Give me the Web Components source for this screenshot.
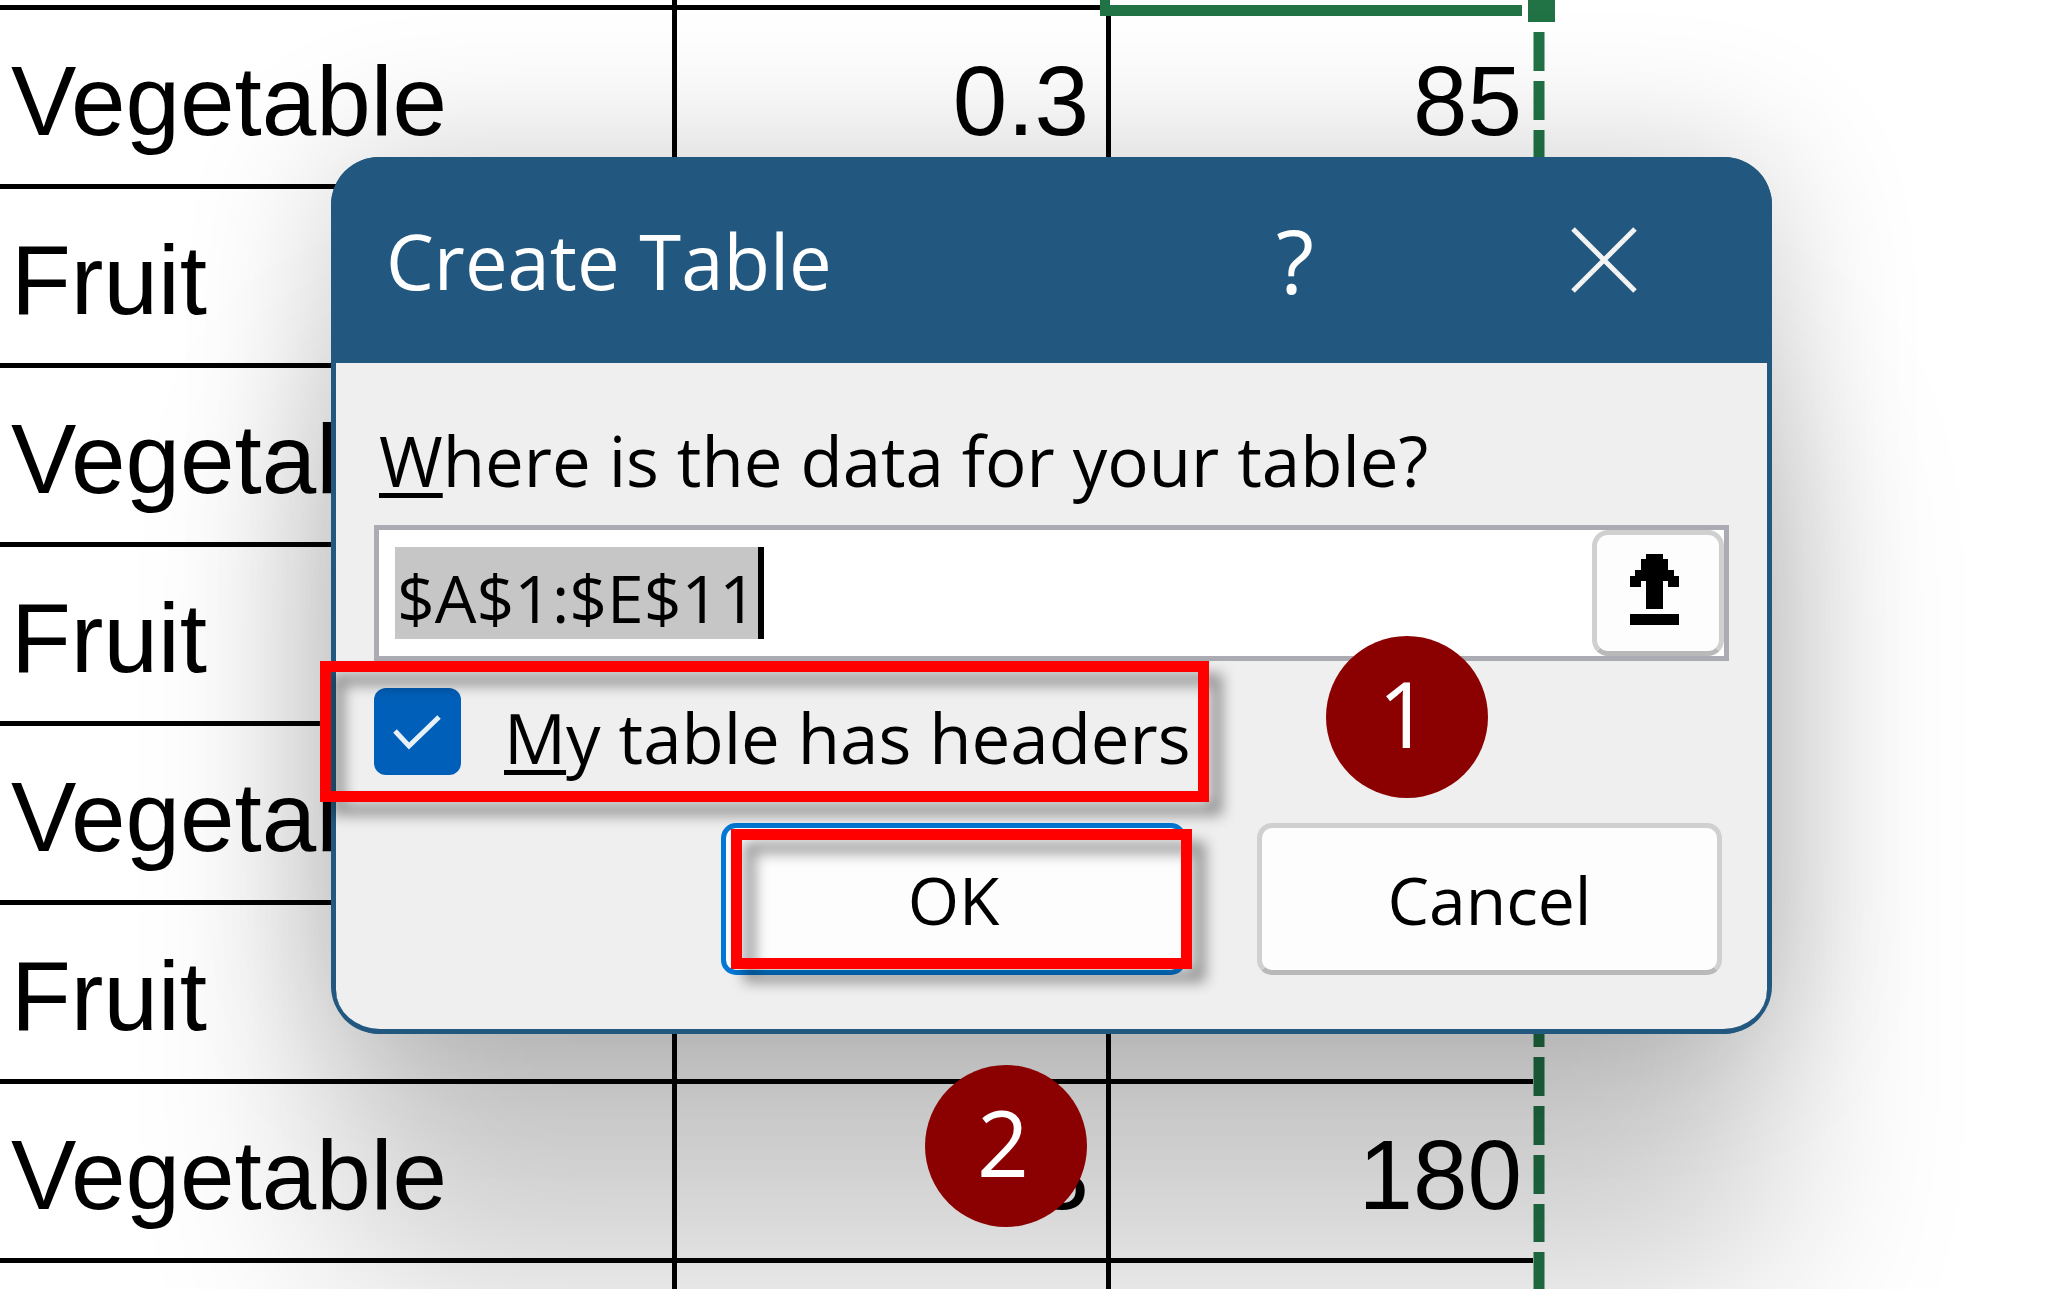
<!DOCTYPE html>
<html lang="en">
<head>
<meta charset="utf-8">
<title>Create Table</title>
<style>
  html, body { margin: 0; height: 100%; background: #fff; }
  body { overflow: hidden; font-family: "Open Sans", "Noto Sans", sans-serif; color: #000; }
</style>
</head>
<body>
<work-space>
  <sheet-grid></sheet-grid>
  <create-dialog heading="Create Table"></create-dialog>
  <step-badge class="two">2</step-badge>
</work-space>
<script>
const define = (name, html, setup) => {
  const template = document.createElement('template');
  template.innerHTML = html;
  customElements.define(name, class extends HTMLElement {
    constructor() {
      super();
      this.attachShadow({ mode: 'open' }).append(template.content.cloneNode(true));
    }
    connectedCallback() { if (setup) setup(this, this.shadowRoot); }
  });
};

define('step-badge', `
  <style>
    :host { display: grid; place-items: center; box-sizing: border-box; width: 162px; height: 162px; padding: 0 6px 8px 0;
      border-radius: 50%; background: #8b0000; color: #fff; font-size: 91px; font-weight: 500; line-height: 100px; }
  </style>
  <slot></slot>`);

define('high-light', `
  <style>
    :host { display: block; box-sizing: border-box; border: 11px solid #f00; pointer-events: none;
      filter: drop-shadow(13px 13px 7px rgba(0, 0, 0, .42)); }
  </style>`);

define('push-button', `
  <style>
    :host { display: block; width: 465px; }
    button { display: block; box-sizing: border-box; width: 100%; height: 152px; padding: 0; border: 5px solid #d0d0d0;
      border-bottom-color: #b9b9b9; border-radius: 15px; background: #fdfdfd; color: inherit; font: inherit; }
    :host([primary]) button { border-color: #0078d4; }
  </style>
  <button type="button"><slot></slot></button>`);

define('check-option', `
  <style>
    :host { display: flex; }
    label { display: flex; gap: 43px; align-items: center; height: 87px; white-space: nowrap; }
    .box { display: grid; width: 87px; height: 87px; }
    .box > * { grid-area: 1 / 1; }
    input { appearance: none; width: 87px; height: 87px; margin: 0; border-radius: 12px; background: #005fb8; }
    svg { width: 87px; height: 87px; pointer-events: none; }
    .text { padding-top: 10px; }
  </style>
  <label><span class="box"><input type="checkbox" checked>
    <svg viewBox="0 0 87 87" fill="none" stroke="#e8f0f8" stroke-width="5"><path d="M21 43 35 58 65 29"/></svg></span>
    <span class="text"><slot></slot></span></label>`);

define('range-field', `
  <style>
    :host { display: flex; box-sizing: border-box; height: 136px; padding-left: 16px; border: 5px solid #ababb3; background: #fff;
      align-items: center; }
    input { box-sizing: border-box; width: 363px; height: 92px; margin: 0; border: 0; padding: 8px 0 0 2px; outline: 0;
      background: #c6c6c6; color: #000; font: inherit; }
    .caret { width: 6px; height: 92px; background: #000; }
    button { display: grid; place-items: center; box-sizing: border-box; width: 132px; height: 126px; margin-left: auto; padding: 0 8px 8px 0;
      border: 5px solid #d0d0d0; border-bottom-color: #b9b9b9; border-radius: 16px; background: #fdfdfd; }
    svg { display: block; width: 49px; height: 71px; }
  </style>
  <input type="text" aria-label="Where is the data for your table?" value="$A$1:$E$11" spellcheck="false">
  <span class="caret"></span>
  <button type="button" aria-label="Collapse dialog">
    <svg viewBox="0 0 9 13" preserveAspectRatio="none" shape-rendering="crispEdges"><path d="M3 0h3v1h1v2h1v1h1v2H7V5H6v5H3V5H2v1H0V4h1V3h1V1h1zM0 11h9v2H0z"/></svg>
  </button>`);

define('title-bar', `
  <style>
    :host { display: flex; align-items: center; box-sizing: border-box; height: 206px; padding: 0 88px 0 55px;
      background: #22587f; color: #fff; border-radius: 48px 48px 0 0; }
    h1 { margin: 0 auto 0 0; padding-top: 2px; font-size: 76px; line-height: 110px; font-weight: 400; }
    button { display: grid; place-items: center; width: 160px; height: 110px; margin: 0; padding: 0; border: 0; background: none; color: inherit;
      font: inherit; font-size: 88px; line-height: 110px; }
    button + button { margin-left: 149px; }
    svg { display: block; width: 66px; height: 66px; }
  </style>
  <h1><slot></slot></h1>
  <button type="button">?</button>
  <button type="button" aria-label="Close"><svg viewBox="0 0 66 66" stroke="#f3f3f3" stroke-width="5"><path d="M2 2 64 64M64 2 2 64"/></svg></button>`);

define('create-dialog', `
  <style>
    :host { display: block; font-size: 66px; line-height: 90px; }
    section { border-radius: 48px; background: #22587f;
      box-shadow: 0 250px 200px rgba(0, 0, 0, .2), 0 0 150px rgba(0, 0, 0, .2); }
    .body { position: relative; display: flex; flex-direction: column; margin: 0 5px; padding: 52px 38px 54px; border-bottom: 5px solid #22587f;
      background: #efefef; border-radius: 0 0 44px 44px; }
    p { margin: 0 0 20px 5px; }
    p, check-option { font-size: 69px; }
    u { text-decoration: underline; text-decoration-thickness: 5px; text-underline-offset: 6px; text-decoration-skip-ink: none; }
    .option { position: relative; display: flex; align-self: flex-start; margin: 27px 0 48px; z-index: 1; }
    .option high-light { position: absolute; inset: -27px -18px -27px -54px; }
    .actions { display: flex; justify-content: flex-end; gap: 71px; padding-right: 7px; }
    .ok { position: relative; }
    .ok high-light { position: absolute; inset: 6px -6px 6px 10px; }
    step-badge { position: absolute; right: 279px; top: 273px; z-index: 2; }
  </style>
  <section role="dialog" aria-label="Create Table">
    <title-bar></title-bar>
    <div class="body">
      <p><u>W</u>here is the data for your table?</p>
      <range-field></range-field>
      <div class="option"><check-option><u>M</u>y table has headers</check-option><high-light></high-light></div>
      <div class="actions">
        <div class="ok"><push-button primary>OK</push-button><high-light></high-light></div>
        <push-button>Cancel</push-button>
      </div>
      <step-badge>1</step-badge>
    </div>
  </section>`, (host, root) => { root.querySelector('title-bar').textContent = host.getAttribute('heading'); });

define('sheet-grid', `
  <style>
    :host { display: block; position: relative; font-family: "Liberation Sans", Arial, sans-serif; font-size: 98px; }
    table { width: 100%; table-layout: fixed; border-spacing: 0; border-collapse: separate; }
    td { box-sizing: border-box; height: 179px; padding: 7px 17px 0 11px; border: solid #000; border-width: 0 5px 5px 0;
      line-height: 110px; vertical-align: middle; white-space: nowrap; }
    td + td { text-align: right; }
    td:nth-child(3) { border-right: 0; padding-right: 11px; }
    td:nth-child(4) { border: 0; }
    tr:first-child td { height: 10px; padding: 0; }
    .c1 { width: 33.06%; } .c2 { width: 21.19%; } .c3 { width: 20.61%; }
    .range { position: absolute; top: 0; left: 53.72%; width: 460px; height: 1300px; }
  </style>
  <table><colgroup><col class="c1"><col class="c2"><col class="c3"><col></colgroup><tbody></tbody></table>
  <svg class="range" viewBox="0 0 460 1300" aria-hidden="true">
    <path fill="#fff" d="M10 0h412v5H10zM422 0h6v16h-6z"/>
    <path fill="#217346" d="M0 0h10v5h412v11H0zM428 0h27v22h-27z"/>
    <path fill="none" stroke="#217346" stroke-width="11" stroke-dasharray="39 10 39 10 39 10 39 10 38 10" d="M439 32V1300"/>
  </svg>`, (host, root) => {
  const rows = [['', '', ''], ['Vegetable', '0.3', '85'], ['Fruit', '', ''], ['Vegetable', '', ''], ['Fruit', '', ''],
    ['Vegetable', '', ''], ['Fruit', '', ''], ['Vegetable', '0.3', '180'], ['', '', '']];
  const body = root.querySelector('tbody');
  for (const row of rows) {
    const tr = body.insertRow();
    for (const value of [...row, '']) tr.insertCell().textContent = value;
  }
});

define('work-space', `
  <style>
    :host { display: block; position: relative; height: 100vh; overflow: hidden; }
    ::slotted(create-dialog) { position: absolute; left: 331px; right: 276px; top: 157px; }
    ::slotted(.two) { position: absolute; left: 925px; top: 1065px; }
  </style>
  <slot></slot>`);
</script>
</body>
</html>
